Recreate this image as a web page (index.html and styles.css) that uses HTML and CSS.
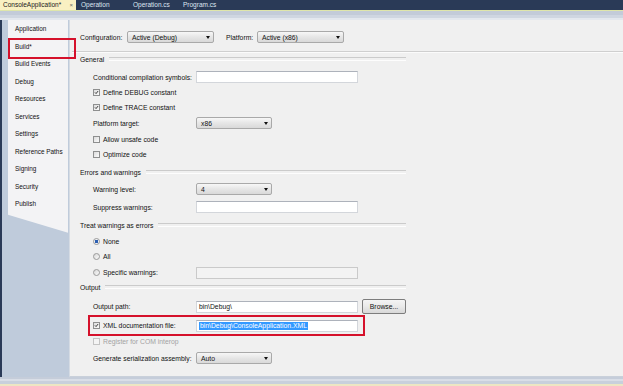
FILE: index.html
```html
<!DOCTYPE html>
<html lang="en">
<head>
  <meta charset="UTF-8">
  <title>ConsoleApplication - Build</title>
  <link rel="stylesheet" href="styles.css">
</head>
<body>

  <!-- document tabs -->
  <div class="tabstrip">
    <div class="doc-tab active">ConsoleApplication* <span class="close">×</span></div>
    <div class="doc-tab tab-op">Operation</div>
    <div class="doc-tab tab-opcs">Operation.cs</div>
    <div class="doc-tab">Program.cs</div>
  </div>
  <div class="tabrule"></div>

  <div class="workspace">
    <!-- property pages -->
    <div class="side">
      <ul class="pages">
        <li>Application</li>
        <li class="current">Build*</li>
        <li>Build Events</li>
        <li>Debug</li>
        <li>Resources</li>
        <li>Services</li>
        <li>Settings</li>
        <li>Reference Paths</li>
        <li>Signing</li>
        <li>Security</li>
        <li>Publish</li>
      </ul>
    </div>

    <div class="panel">
      <div class="config-row">
        <span class="config-label">Configuration:</span>
        <div class="combo config-combo">Active (Debug)</div>
        <span class="platform-label">Platform:</span>
        <div class="combo config-combo">Active (x86)</div>
      </div>
      <div class="sep"></div>

      <div class="section-head head-general">General</div>
      <div class="field row-cond">
        <span class="field-label">Conditional compilation symbols:</span>
        <div class="text-box"></div>
      </div>
      <div class="check row-first"><span class="box checked"><svg viewBox="0 0 7 7"><path d="M1.4 3.4 L2.9 5 L5.7 1.5"/></svg></span>Define DEBUG constant</div>
      <div class="check"><span class="box checked"><svg viewBox="0 0 7 7"><path d="M1.4 3.4 L2.9 5 L5.7 1.5"/></svg></span>Define TRACE constant</div>
      <div class="field row-platform">
        <span class="field-label">Platform target:</span>
        <div class="combo field-combo">x86</div>
      </div>
      <div class="check row-tall"><span class="box"></span>Allow unsafe code</div>
      <div class="check"><span class="box"></span>Optimize code</div>

      <div class="section-head head-errors">Errors and warnings</div>
      <div class="field row-warn">
        <span class="field-label">Warning level:</span>
        <div class="combo field-combo">4</div>
      </div>
      <div class="field row-suppress">
        <span class="field-label">Suppress warnings:</span>
        <div class="text-box"></div>
      </div>

      <div class="section-head head-treat">Treat warnings as errors</div>
      <div class="check row-none"><span class="radio on"></span>None</div>
      <div class="check"><span class="radio"></span>All</div>
      <div class="field row-specific">
        <span class="field-label"><span class="radio"></span>Specific warnings:</span>
        <div class="text-box disabled"></div>
      </div>

      <div class="section-head head-output">Output</div>
      <div class="field row-outpath">
        <span class="field-label">Output path:</span>
        <div class="text-box">bin\Debug\</div>
        <div class="button">Browse...</div>
      </div>
      <div class="field flagged">
        <span class="field-label"><span class="box checked"><svg viewBox="0 0 7 7"><path d="M1.4 3.4 L2.9 5 L5.7 1.5"/></svg></span>XML documentation file:</span>
        <div class="text-box"><span class="sel">bin\Debug\ConsoleApplication.XML</span></div>
      </div>
      <div class="check row-register disabled"><span class="box"></span>Register for COM interop</div>
      <div class="field row-generate">
        <span class="field-label">Generate serialization assembly:</span>
        <div class="combo field-combo">Auto</div>
      </div>
    </div>
  </div>

  <div class="statusline"></div>

</body>
</html>
```

FILE: styles.css
```css
* {
  box-sizing: border-box;
}

body {
  margin: 0;
  width: 623px;
  height: 386px;
  overflow: hidden;
  background: #bfcbdb;
  font-family: "Liberation Sans", Arial, sans-serif;
  font-size: 6.8px;
  color: #111;
}

/* document tabs */
.tabstrip {
  display: flex;
  height: 10px;
  line-height: 10px;
  background: #2a3a57;
}

.doc-tab {
  padding: 0 5px;
  font-size: 6.5px;
  color: #dfe6f2;
  white-space: nowrap;
}

.doc-tab.active {
  display: flex;
  justify-content: space-between;
  width: 76px;
  padding: 0 3px;
  background: #f9f0c2;
  color: #1a1a1a;
}

.close {
  color: #6b6b6b;
  font-size: 6px;
}

.tab-op {
  width: 52px;
}

.tab-opcs {
  width: 50px;
}

.tabrule {
  height: 10px;
  background: linear-gradient(#dfe6ab 0 1px, #c3cbd9 1px 5px, #cfd6e1 5px 8px, #e3e7ee 8px 10px);
}

/* main area */
.workspace {
  display: flex;
  height: 357px;
  border-left: 2px solid #2a3a57;
}

.side {
  width: 67px;
  padding-left: 6px;
}

.pages {
  position: relative;
  isolation: isolate;
  list-style: none;
  width: 60px;
  margin: 0;
  padding: 0.25px 0 20px 7px;
}

.pages::before {
  content: '';
  position: absolute;
  inset: 0;
  z-index: -1;
  background: #f3f3f5;
  clip-path: polygon(0 0, 100% 0, 100% 100%, 0 calc(100% - 18px));
}

.pages li {
  position: relative;
  height: 17.5px;
  line-height: 17.5px;
  font-size: 6.4px;
}

.pages li.current::after {
  content: '';
  position: absolute;
  top: 0;
  left: -7px;
  width: 64px;
  height: 17.5px;
  border: 2px solid #d5112b;
}

.panel {
  flex: 1;
  background: #f0f0f0;
  border-left: 1px solid #d5dbe3;
  border-bottom: 1px solid #c9d0da;
  padding: 11px 0 0 10px;
}

.config-row {
  display: flex;
  align-items: center;
  height: 12px;
}

.config-label {
  width: 47px;
}

.platform-label {
  width: 31px;
  margin-left: 12px;
}

.config-combo {
  width: 87px;
}

.sep {
  height: 2px;
  margin: 8px 0 0 -8px;
  border-top: 1px solid #cfcfcf;
  border-bottom: 1px solid #fbfbfb;
}

/* section headers */
.section-head {
  display: flex;
  align-items: center;
  width: 326px;
  height: 10px;
}

.section-head::after {
  content: '';
  flex: 1;
  height: 2px;
  margin-left: 5px;
  border-top: 1px solid #cbcbcb;
  border-bottom: 1px solid #fdfdfd;
}

.head-general {
  margin-top: 1px;
}

.head-errors {
  margin-top: 5px;
}

.head-treat {
  margin-top: 7px;
}

.head-output {
  margin-top: 1px;
}

/* rows */
.field,
.check {
  display: flex;
  align-items: center;
  padding-left: 13px;
}

.field {
  height: 12px;
}

.check {
  height: 15px;
}

.field-label {
  display: flex;
  align-items: center;
  width: 103px;
  white-space: nowrap;
}

.row-cond {
  margin-top: 7px;
}

.row-first {
  margin-top: 2px;
}

.row-platform,
.row-tall {
  height: 16px;
}

.row-warn {
  margin-top: 6px;
}

.row-suppress {
  margin-top: 6px;
}

.row-none {
  margin-top: 4px;
}

.row-specific {
  height: 17px;
}

.row-outpath {
  height: 15px;
  margin-top: 7px;
}

.flagged {
  width: 277px;
  height: 21px;
  margin: 1px 0 0 8px;
  padding-left: 3px;
  border: 2px solid #d5112b;
}

.row-register {
  height: 10px;
}

.row-generate {
  margin-top: 6px;
}

.disabled {
  color: #a3a3a3;
}

/* controls */
.combo {
  display: flex;
  align-items: center;
  justify-content: space-between;
  height: 12px;
  padding: 0 3px 0 4px;
  border: 1px solid #a9a9a9;
  border-radius: 2px;
  background: linear-gradient(#f7f7f7, #e6e6e6 50%, #d9d9d9);
}

.combo::after {
  content: '';
  border-left: 2px solid transparent;
  border-right: 2px solid transparent;
  border-top: 3px solid #111;
}

.field-combo {
  width: 76px;
}

.text-box {
  width: 162px;
  height: 12px;
  line-height: 10px;
  padding-left: 2px;
  background: #fff;
  border: 1px solid #d3d6db;
  border-top-color: #adb2bb;
}

.text-box.disabled {
  background: #f3f3f3;
  border-color: #cacaca;
}

.sel {
  display: inline-block;
  padding: 0 1px;
  background: #3399ff;
  color: #fff;
  line-height: 8px;
}

.button {
  width: 44px;
  height: 15px;
  margin-left: 4px;
  line-height: 13px;
  text-align: center;
  border: 1px solid #7d7d7d;
  border-radius: 2px;
  background: linear-gradient(#f4f4f4, #e9e9e9 50%, #d8d8d8);
}

.box {
  flex: none;
  width: 7px;
  height: 7px;
  margin-right: 3px;
  border: 1px solid #8e8f8f;
  background: linear-gradient(135deg, #dcdcdc, #fbfbfb);
}

.box svg {
  display: block;
  width: 5px;
  height: 5px;
}

.box path {
  fill: none;
  stroke: #2b2b2b;
  stroke-width: 1.3;
}

.disabled .box {
  border-color: #c4c4c4;
  background: #f4f4f4;
}

.radio {
  flex: none;
  width: 7px;
  height: 7px;
  margin-right: 3px;
  border: 1px solid #9a9a9a;
  border-radius: 50%;
  background: linear-gradient(135deg, #d8d8d8, #fafafa);
}

.radio.on {
  background: radial-gradient(circle, #2d5fb2 0 1.6px, #eef1f5 2px);
}

.statusline {
  height: 9px;
  background: linear-gradient(#c5cdda 0 2px, #d9dee7 2px 4px, #c8d0dc 4px 7px, #ede6c3 7px 9px);
}
```
